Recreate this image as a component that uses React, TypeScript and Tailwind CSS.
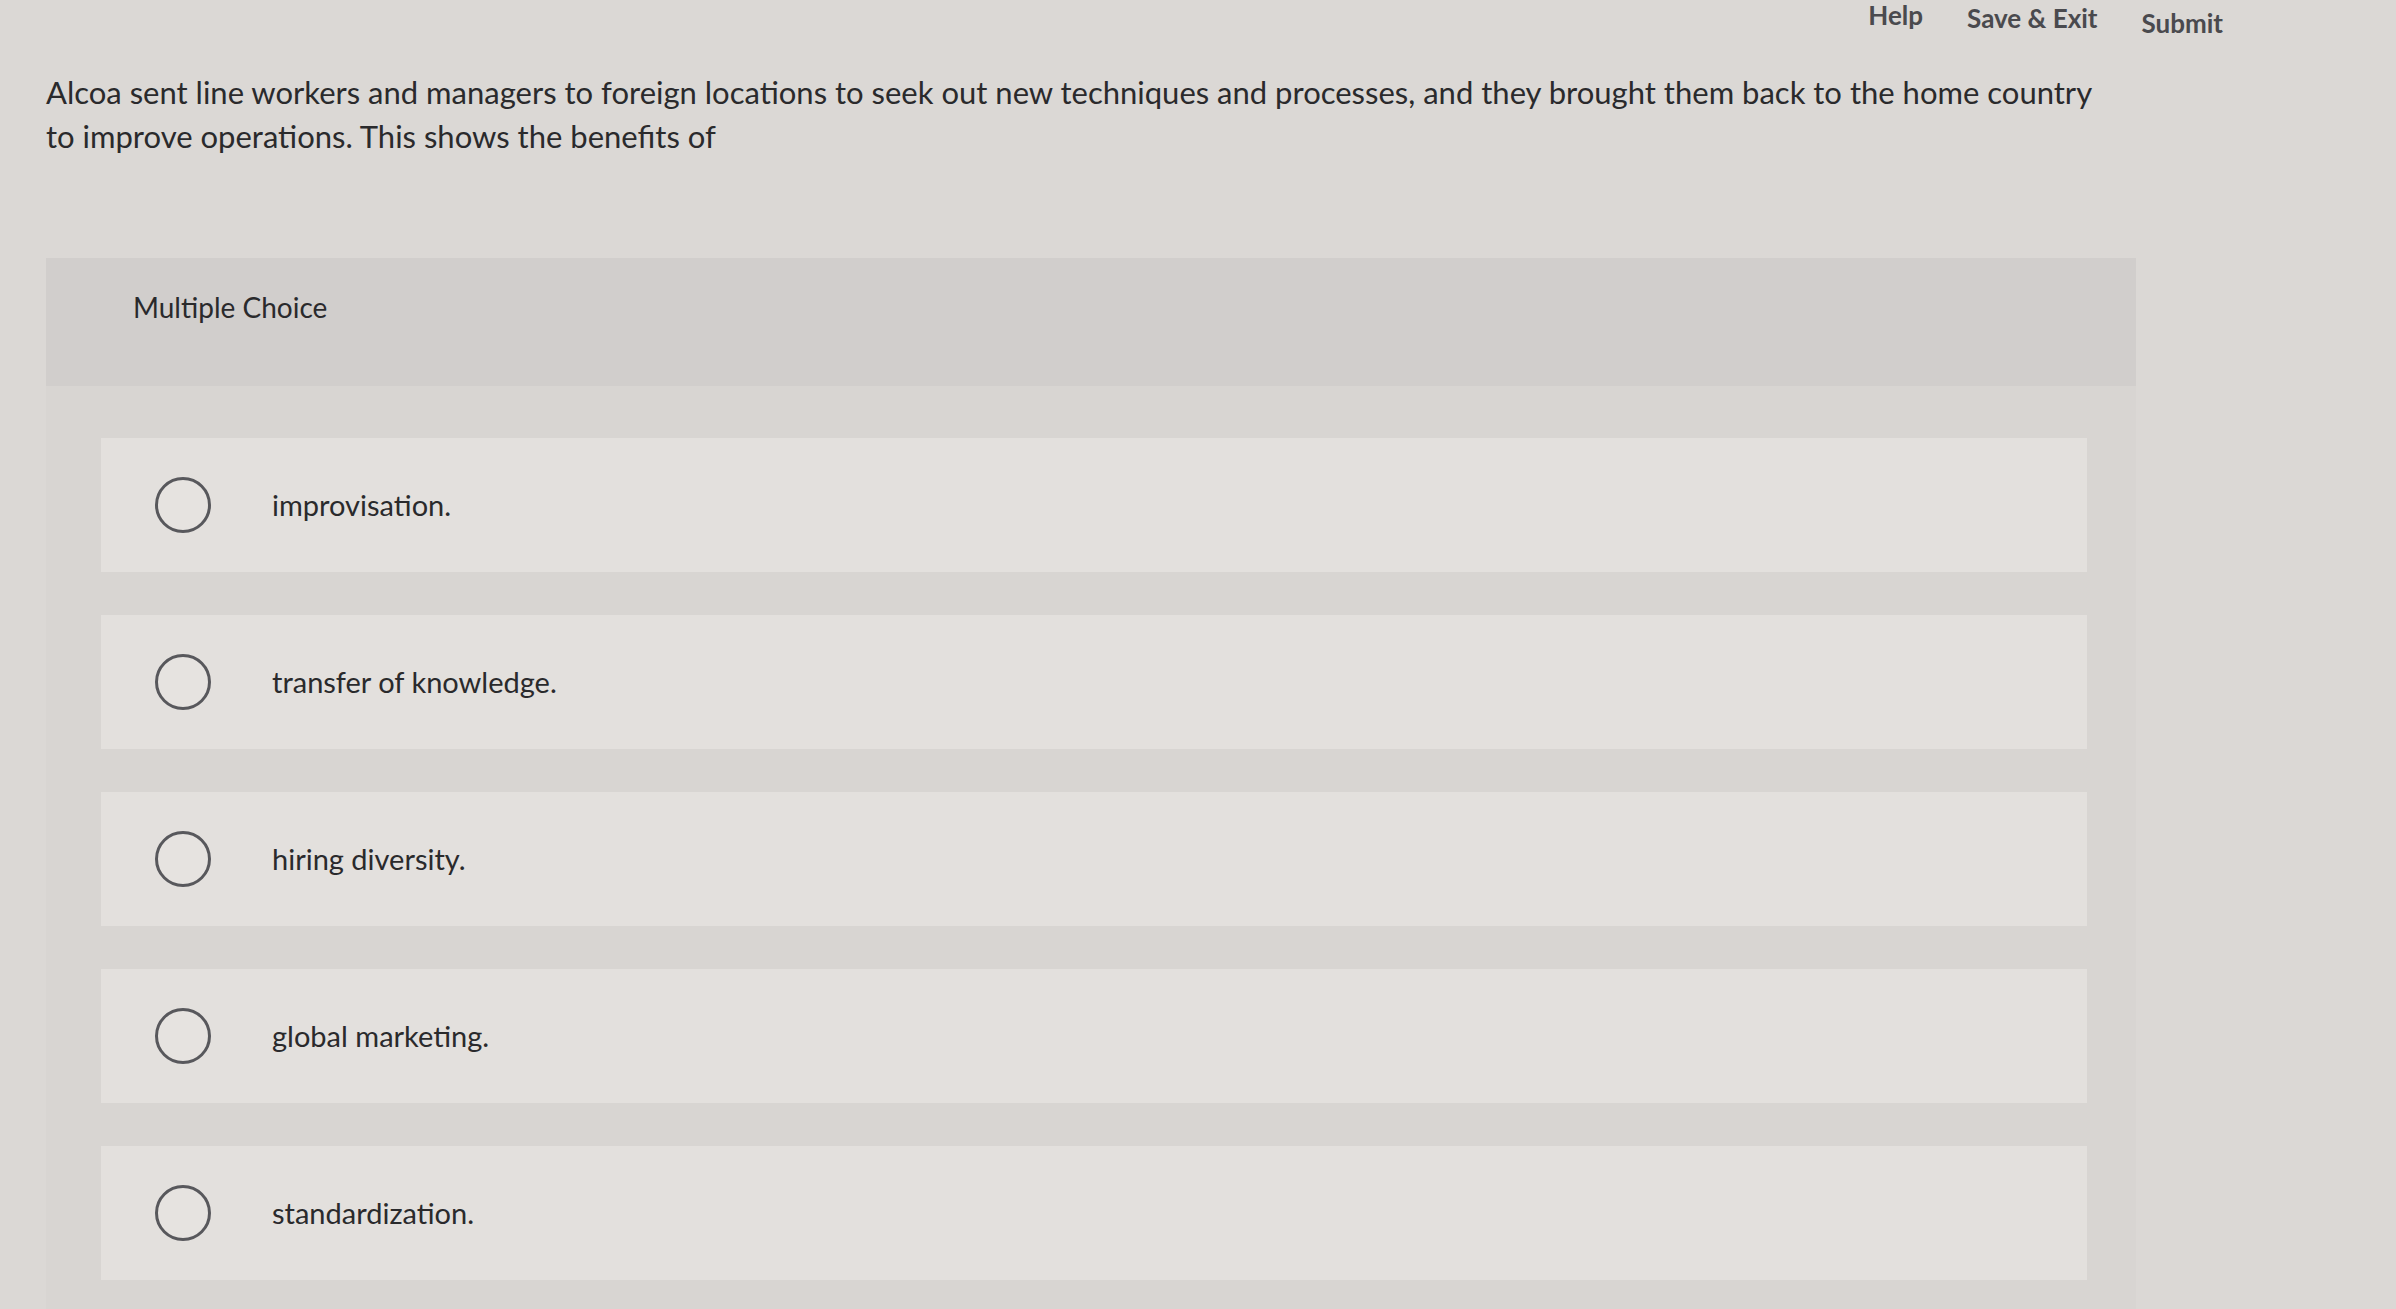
const options = [
  'improvisation.',
  'transfer of knowledge.',
  'hiring diversity.',
  'global marketing.',
  'standardization.',
];

function Radio() {
  return (
    <span className="block h-[56px] w-[56px] shrink-0 rounded-full border-[3px] border-[#58585c] bg-[#e6e3e0]" />
  );
}

export default function App() {
  return (
    <div className="h-[1309px] w-full overflow-hidden bg-[#dbd8d5] font-['Lato',sans-serif] text-[#2a2a2c]">
      {/* top links */}
      <div className="flex h-[40px] items-start justify-end pr-[173px]">
        <div className="flex items-start gap-[44px] text-[26px] font-bold text-[#4a4a4e]">
          <span className="-mt-[4px]">Help</span>
          <span className="-mt-[1px]">Save &amp; Exit</span>
          <span className="mt-[4px]">Submit</span>
        </div>
      </div>

      {/* question */}
      <div className="w-[2106px] pl-[46px] pt-[30px] text-[31px] leading-[44px]">
        Alcoa sent line workers and managers to foreign locations to seek out new techniques and processes, and they brought them back to the home country to improve operations. This shows the benefits of
      </div>

      {/* multiple choice panel */}
      <div className="ml-[46px] mt-[100px] w-[2090px] bg-[#d8d5d2]">
        <div className="h-[128px] bg-[#d1cecc] pl-[87px] pt-[28px] text-[28px]">
          Multiple Choice
        </div>
        <div className="flex flex-col gap-[43px] pb-[60px] pl-[55px] pr-[49px] pt-[52px]">
          {options.map((o) => (
            <div
              key={o}
              className="flex h-[134px] items-center bg-[#e3e0dd] pl-[54px]"
            >
              <Radio />
              <span className="ml-[61px] text-[29px]">{o}</span>
            </div>
          ))}
        </div>
      </div>
    </div>
  );
}
